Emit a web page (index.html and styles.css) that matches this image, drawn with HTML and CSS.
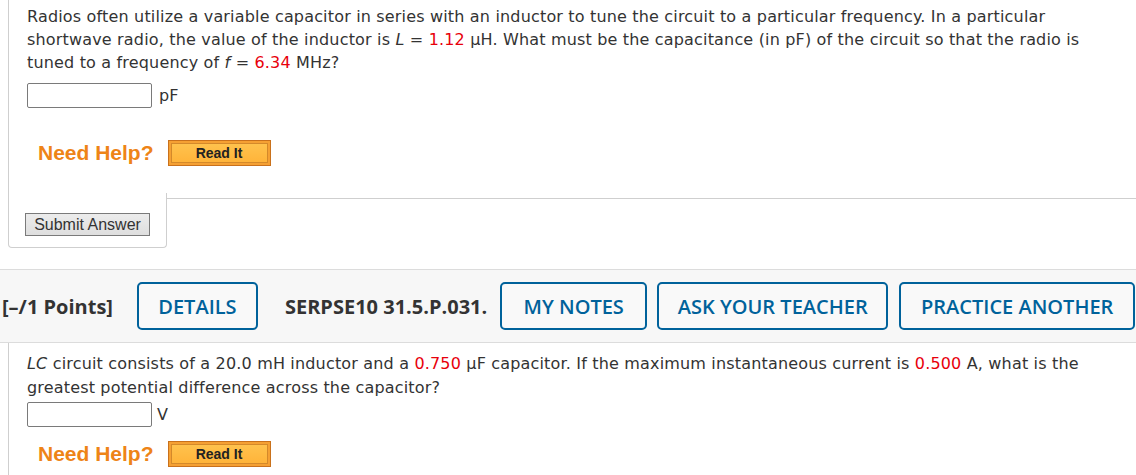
FILE: index.html
```html
<!DOCTYPE html>
<html>
<head>
<meta charset="utf-8">
<link rel="stylesheet" href="styles.css">
</head>
<body>
<div class="card">
  <div class="body">
    <p class="q">Radios often utilize a variable capacitor in series with an inductor to tune the circuit to a particular frequency. In a particular shortwave radio, the value of the inductor is <i>L</i> = <span class="red">1.12</span> μH. What must be the capacitance (in pF) of the circuit so that the radio is tuned to a frequency of <i>f</i> = <span class="red">6.34</span> MHz?</p>
    <div class="answer"><span class="inp"></span><span class="unit">pF</span></div>
    <div class="help"><span class="need">Need Help?</span><span class="readit"><span class="readit-in">Read It</span></span></div>
  </div>
  <div class="foot">
    <div class="submit-box"><span class="submit">Submit Answer</span></div>
    <div class="filler"></div>
  </div>
</div>

<div class="bar">
  <span class="points">[–/1 Points]</span>
  <span class="btn details">DETAILS</span>
  <span class="code">SERPSE10 31.5.P.031.</span>
  <span class="btn notes">MY NOTES</span>
  <span class="btn ask">ASK YOUR TEACHER</span>
  <span class="btn practice">PRACTICE ANOTHER</span>
</div>

<div class="card2">
  <p class="q q2"><i>LC</i> circuit consists of a 20.0 mH inductor and a <span class="red">0.750</span> μF capacitor. If the maximum instantaneous current is <span class="red">0.500</span> A, what is the greatest potential difference across the capacitor?</p>
  <div class="answer a2"><span class="inp"></span><span class="unit u2">V</span></div>
  <div class="help h2"><span class="need">Need Help?</span><span class="readit"><span class="readit-in">Read It</span></span></div>
</div>
</body>
</html>
```

FILE: styles.css
```css
html, body { margin: 0; padding: 0; background: #fff; }
body { width: 1136px; overflow: hidden; }

.card { margin-left: 8px; }
.body {
  border-left: 1px solid #cfcfcf;
  padding: 5px 0 0 18px;
  height: 193px;
  box-sizing: border-box;
}
.q {
  margin: 0;
  font-family: "DejaVu Sans", Verdana, sans-serif;
  font-size: 16px;
  letter-spacing: 0.17px;
  line-height: 23px;
  color: #333;
  width: 1085px;
}
.red { color: #e8000b; }
.answer { display: flex; align-items: center; margin-top: 9px; }
.inp {
  display: inline-block;
  width: 125px;
  height: 25px;
  box-sizing: border-box;
  border: 1px solid #7a7a7a;
  border-radius: 2px;
  background: #fff;
}
.unit {
  font-family: "DejaVu Sans", Verdana, sans-serif;
  font-size: 16px;
  color: #333;
  margin-left: 7px;
}
.help { display: flex; align-items: center; margin-top: 32px; padding-left: 11px; }
.need {
  font-family: "Liberation Sans", Arial, sans-serif;
  font-weight: bold;
  font-size: 21px;
  color: #ee8417;
  margin-right: 14px;
}
.readit {
  display: inline-block;
  width: 103px;
  height: 26px;
  box-sizing: border-box;
  border: 1px solid #c9711c;
  background: #f5a033;
  padding: 2px;
}
.readit-in {
  display: flex;
  align-items: center;
  justify-content: center;
  height: 100%;
  box-sizing: border-box;
  border: 1px solid #d4892a;
  background: linear-gradient(#ffc24d, #ffb43a);
  font-family: "Liberation Sans", Arial, sans-serif;
  font-weight: bold;
  font-size: 14px;
  color: #222;
}
.foot { display: flex; height: 55px; }
.submit-box {
  width: 159px;
  box-sizing: border-box;
  border: 1px solid #cfcfcf;
  border-top: none;
  border-radius: 0 0 4px 4px;
  padding: 20px 0 0 16px;
}
.submit {
  display: inline-block;
  width: 125px;
  height: 23px;
  box-sizing: border-box;
  border: 1px solid #7a7a7a;
  background: linear-gradient(#ececec, #dedede);
  font-family: "Liberation Sans", Arial, sans-serif;
  font-size: 16px;
  line-height: 21px;
  text-align: center;
  color: #333;
}
.filler { flex: 1; border-top: 1px solid #cfcfcf; margin-top: 5px; }

.bar {
  margin-top: 21px;
  height: 74px;
  box-sizing: border-box;
  border-top: 1px solid #dcdcdc;
  border-bottom: 1px solid #dcdcdc;
  background: #f7f7f7;
  display: flex;
  align-items: center;
  padding-left: 2px;
  font-family: "Open Sans", sans-serif;
  font-size: 20px;
  white-space: nowrap;
}
.bar > span { flex-shrink: 0; }
.points { font-weight: 700; color: #333; margin-right: 24px; }
.btn {
  display: inline-flex;
  align-items: center;
  justify-content: center;
  height: 48px;
  box-sizing: border-box;
  border: 2px solid #00629b;
  border-radius: 5px;
  color: #00629b;
  font-weight: 600;
  background: #f9f9f9;
}
.details { width: 121px; margin-right: 27px; }
.code { font-weight: 700; color: #333; margin-right: 13px; }
.notes { width: 147px; margin-right: 10px; }
.ask { width: 231px; margin-right: 11px; }
.practice { width: 236px; }

.card2 {
  margin-left: 8px;
  border-left: 1px solid #cfcfcf;
  padding: 9px 0 0 18px;
  height: 140px;
}
.q2 { line-height: 24px; }
.a2 { margin-top: 2px; }
.u2 { margin-left: 5px; }
.h2 { margin-top: 14px; }
```
